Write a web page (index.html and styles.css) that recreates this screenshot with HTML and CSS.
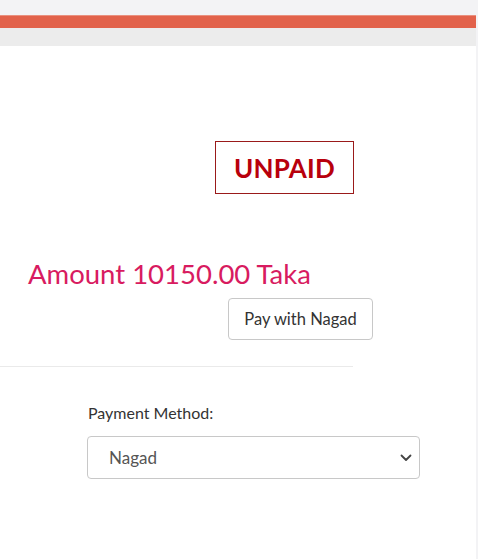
FILE: index.html
```html
<!DOCTYPE html>
<html>
<head>
<meta charset="utf-8">
<link rel="stylesheet" href="styles.css">
</head>
<body>
<div class="page">
  <div class="accent"></div>
  <div class="subbar"></div>
  <div class="content">
    <div class="status-row">
      <div class="badge">UNPAID</div>
    </div>
    <div class="amount">Amount 10150.00 Taka</div>
    <div class="pay-row">
      <button class="pay-btn" type="button">Pay with Nagad</button>
    </div>
    <div class="divider"></div>
    <div class="form-group">
      <label class="label" for="method">Payment Method:</label>
      <div class="select-wrap">
        <select id="method" class="select">
          <option>Nagad</option>
        </select>
        <svg class="chevron" width="12" height="8" viewBox="0 0 12 8"><path d="M1.5 1.5 L6 6 L10.5 1.5" fill="none" stroke="#444" stroke-width="1.8" stroke-linecap="round" stroke-linejoin="round"/></svg>
      </div>
    </div>
  </div>
</div>
</body>
</html>
```
FILE: styles.css
```css
html, body {
  margin: 0;
  padding: 0;
}
body {
  background: #f3f3f5;
  font-family: Lato, "Open Sans", sans-serif;
  color: #333;
}
.page {
  width: 476px;
  margin-top: 15px;
  background: #fff;
  min-height: 544px;
}
.accent {
  height: 13px;
  background: #e2624b;
  border-top: 1px solid #e9907f;
  box-sizing: border-box;
}
.subbar {
  height: 18px;
  background: #ececec;
}
.content {
  padding-top: 95px;
}
.status-row {
  display: flex;
  padding-left: 215px;
}
.badge {
  box-sizing: border-box;
  width: 139px;
  height: 53px;
  border: 1px solid #9a1a1a;
  color: #b8000c;
  font-weight: bold;
  font-size: 26px;
  display: flex;
  align-items: center;
  justify-content: center;
  letter-spacing: 0.2px;
}
.amount {
  margin-top: 64px;
  padding-left: 28px;
  font-size: 27.5px;
  line-height: 32px;
  color: #d81b60;
}
.pay-row {
  display: flex;
  padding-left: 228px;
  margin-top: 8px;
}
.pay-btn {
  box-sizing: border-box;
  width: 145px;
  height: 42px;
  border: 1px solid #c8c8c8;
  border-radius: 4px;
  background: #fff;
  color: #333;
  font-family: inherit;
  font-size: 16.5px;
  padding: 0;
}
.divider {
  width: 353px;
  height: 1px;
  background: #eaeaea;
  margin-top: 26px;
}
.form-group {
  padding-left: 87px;
  padding-top: 36px;
}
.label {
  display: block;
  font-size: 16px;
  line-height: 20px;
  color: #333;
  padding-left: 1px;
}
.select-wrap {
  position: relative;
  width: 333px;
  margin-top: 13px;
}
.select {
  box-sizing: border-box;
  width: 333px;
  height: 43px;
  border: 1px solid #c8c8c8;
  border-radius: 4px;
  background: #fff;
  color: #555;
  font-family: inherit;
  font-size: 17px;
  padding: 0 0 0 21px;
  appearance: none;
  -webkit-appearance: none;
}
.chevron {
  position: absolute;
  right: 8px;
  top: 18px;
  pointer-events: none;
}
```
